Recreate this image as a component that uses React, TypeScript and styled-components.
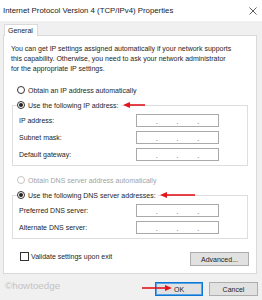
import React from "react";
import styled, { createGlobalStyle } from "styled-components";

const GlobalStyle = createGlobalStyle`
  html, body {
    margin: 0;
    padding: 0;
    background: #f0f0f0;
  }
`;

const Dialog = styled.div`
  position: relative;
  width: 262px;
  height: 300px;
  overflow: hidden;
  background: #f0f0f0;
  font-family: "Liberation Sans", Arial, sans-serif;
  font-size: 7px;
  color: #1e1e1e;
`;

const TitleBar = styled.div`
  display: flex;
  align-items: center;
  justify-content: space-between;
  height: 21px;
  padding: 0 5px 0 3px;
  background: #fff;
  font-size: 7.8px;
  color: #1a1a1a;
`;

const CloseIcon = styled.svg`
  width: 8px;
  height: 8px;
  display: block;
`;

const TabStrip = styled.div`
  display: flex;
  padding: 3px 0 0 4px;
`;

const Tab = styled.div`
  position: relative;
  z-index: 1;
  height: 11px;
  line-height: 11px;
  padding: 0 4px 0 3px;
  margin-bottom: -1px;
  background: #fff;
  border: 1px solid #d9d9d9;
  border-bottom: none;
`;

const Panel = styled.div`
  margin: 0 5px 0 3px;
  padding: 8px 8px 7px 7px;
  background: #fff;
  border: 1px solid #d9d9d9;
`;

const Intro = styled.p`
  margin: 0;
  line-height: 10px;
  white-space: nowrap;
`;

const OptionRow = styled.div<{ $gap: number }>`
  display: flex;
  align-items: center;
  height: 10px;
  margin: ${(p) => p.$gap}px 0 0 6px;
`;

const RadioDot = styled.span<{ $checked?: boolean; $disabled?: boolean }>`
  position: relative;
  box-sizing: border-box;
  width: 8px;
  height: 8px;
  margin-right: 3px;
  border-radius: 50%;
  border: 1px solid ${(p) => (p.$disabled ? "#c4c4c4" : "#333")};
  background: #fff;
  flex-shrink: 0;

  &::after {
    content: "";
    display: ${(p) => (p.$checked ? "block" : "none")};
    position: absolute;
    left: 1px;
    top: 1px;
    width: 4px;
    height: 4px;
    border-radius: 50%;
    background: #222;
  }
`;

const OptionText = styled.span<{ $disabled?: boolean }>`
  color: ${(p) => (p.$disabled ? "#a3a3a3" : "inherit")};
`;

const Group = styled.fieldset`
  margin: 5px 0 0 1px;
  padding: 4px 0 4px 0;
  min-width: 0;
  border: 1px solid #dedede;
`;

const GroupLegend = styled.legend`
  position: relative;
  display: flex;
  align-items: center;
  height: 10px;
  margin-left: 4px;
  padding: 0 2px 0 0;
`;

const Pointer = styled.svg`
  position: absolute;
  top: 50%;
  left: 100%;
  margin-left: 2px;
  transform: translateY(-50%);
  overflow: visible;
`;

const FieldList = styled.div`
  display: flex;
  flex-direction: column;
  gap: 4px;
`;

const FieldRow = styled.div`
  display: flex;
  align-items: center;
  padding-left: 6px;
`;

const FieldLabel = styled.span`
  width: 117px;
  flex-shrink: 0;
`;

const IpBox = styled.div`
  box-sizing: border-box;
  display: flex;
  width: 83px;
  height: 13px;
  border: 1px solid #a9a9a9;
  background: #fff;
`;

const Octet = styled.span`
  flex: 1;
`;

const Separator = styled.span`
  width: 2px;
  line-height: 13px;
  text-align: center;
  color: #444;
`;

const BottomRow = styled.div`
  display: flex;
  align-items: flex-start;
  justify-content: space-between;
  margin-top: 13px;
`;

const CheckOption = styled.label`
  display: flex;
  align-items: center;
  height: 9px;
  margin-left: 9px;
`;

const CheckBox = styled.span`
  box-sizing: border-box;
  width: 9px;
  height: 9px;
  margin-right: 2px;
  border: 1px solid #333;
  background: #fff;
`;

const Button = styled.button<{ $primary?: boolean; $width: number }>`
  box-sizing: border-box;
  width: ${(p) => p.$width}px;
  height: 14px;
  padding: 0;
  font: inherit;
  color: #1e1e1e;
  background: #e1e1e1;
  border: 1px solid ${(p) => (p.$primary ? "#0a78d7" : "#adadad")};
  box-shadow: ${(p) => (p.$primary ? "inset 0 0 0 1px #5aa2e4" : "none")};
`;

const AdvancedButton = styled(Button)`
  margin-right: -1px;
`;

const Footer = styled.div`
  position: relative;
  display: flex;
  align-items: flex-start;
  gap: 6px;
  padding: 8px 4px 0 5px;
`;

const Watermark = styled.span`
  margin-right: auto;
  margin-top: -1px;
  font-size: 9.8px;
  line-height: 10px;
  color: #c3c3c3;
`;

const FooterPointer = styled.svg`
  position: absolute;
  left: 142px;
  top: 11px;
  overflow: visible;
`;

const RED = "#e3141c";

type RadioProps = {
  label: string;
  checked?: boolean;
  disabled?: boolean;
};

function Radio({ label, checked, disabled }: RadioProps) {
  return (
    <>
      <RadioDot $checked={checked} $disabled={disabled} />
      <OptionText $disabled={disabled}>{label}</OptionText>
    </>
  );
}

function IpField() {
  return (
    <IpBox>
      <Octet />
      <Separator>.</Separator>
      <Octet />
      <Separator>.</Separator>
      <Octet />
      <Separator>.</Separator>
      <Octet />
    </IpBox>
  );
}

function AddressGroup({
  legend,
  arrowLength,
  fields,
}: {
  legend: string;
  arrowLength: number;
  fields: string[];
}) {
  return (
    <Group>
      <GroupLegend>
        <Radio label={legend} checked />
        <Pointer width={arrowLength} height={6} viewBox={`0 0 ${arrowLength} 6`}>
          <line x1={6} y1={3} x2={arrowLength} y2={3} stroke={RED} strokeWidth={1.6} />
          <polygon points="7,0 0,3 7,6" fill={RED} />
        </Pointer>
      </GroupLegend>
      <FieldList>
        {fields.map((f) => (
          <FieldRow key={f}>
            <FieldLabel>{f}</FieldLabel>
            <IpField />
          </FieldRow>
        ))}
      </FieldList>
    </Group>
  );
}

export default function App() {
  return (
    <Dialog>
      <GlobalStyle />
      <TitleBar>
        <span>Internet Protocol Version 4 (TCP/IPv4) Properties</span>
        <CloseIcon viewBox="0 0 8 8">
          <path d="M0.5 0.5 L7.5 7.5 M7.5 0.5 L0.5 7.5" stroke="#333" strokeWidth={0.8} fill="none" />
        </CloseIcon>
      </TitleBar>
      <TabStrip>
        <Tab>General</Tab>
      </TabStrip>
      <Panel>
        <Intro>
          You can get IP settings assigned automatically if your network supports
          <br />
          this capability. Otherwise, you need to ask your network administrator
          <br />
          for the appropriate IP settings.
        </Intro>
        <OptionRow $gap={11}>
          <Radio label="Obtain an IP address automatically" />
        </OptionRow>
        <AddressGroup
          legend="Use the following IP address:"
          arrowLength={22}
          fields={["IP address:", "Subnet mask:", "Default gateway:"]}
        />
        <OptionRow $gap={9}>
          <Radio label="Obtain DNS server address automatically" disabled />
        </OptionRow>
        <AddressGroup
          legend="Use the following DNS server addresses:"
          arrowLength={35}
          fields={["Preferred DNS server:", "Alternate DNS server:"]}
        />
        <BottomRow>
          <CheckOption>
            <CheckBox />
            Validate settings upon exit
          </CheckOption>
          <AdvancedButton $width={59}>Advanced...</AdvancedButton>
        </BottomRow>
      </Panel>
      <Footer>
        <Watermark>©howtoedge</Watermark>
        <Button $primary $width={48}>
          OK
        </Button>
        <Button $width={49}>Cancel</Button>
        <FooterPointer width={30} height={6} viewBox="0 0 30 6">
          <line x1={0} y1={3} x2={24} y2={3} stroke={RED} strokeWidth={1.6} />
          <polygon points="23,0 30,3 23,6" fill={RED} />
        </FooterPointer>
      </Footer>
    </Dialog>
  );
}
